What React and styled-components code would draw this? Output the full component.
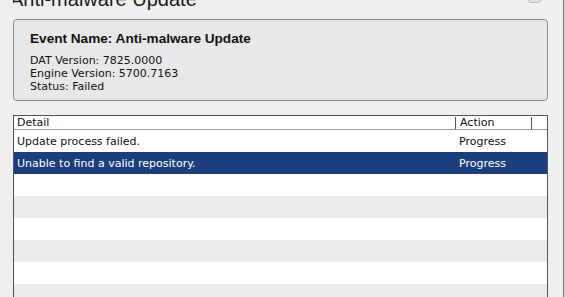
import styled, { createGlobalStyle } from "styled-components";

const GlobalStyle = createGlobalStyle`
  html, body {
    margin: 0;
    padding: 0;
    background: #efefef;
    overflow: hidden;
  }
  * {
    box-sizing: border-box;
  }
`;

// Lista de linhas da tabela
const rows = [
  { id: 1, detail: "Update process failed.", action: "Progress" },
  { id: 2, detail: "Unable to find a valid repository.", action: "Progress" },
  { id: 3, detail: "", action: "" },
  { id: 4, detail: "", action: "" },
  { id: 5, detail: "", action: "" },
  { id: 6, detail: "", action: "" },
  { id: 7, detail: "", action: "" },
  { id: 8, detail: "", action: "" },
];

const selectedId = 2;

export default function App() {
  return (
    <>
      <GlobalStyle />
      <Screen>
        <Window>
          <TitleBar>
            <TitleText>Anti-malware Update</TitleText>
            <CloseButton />
          </TitleBar>
          <EventBox>
            <EventTitle>Event Name: Anti-malware Update</EventTitle>
            <InfoLine>DAT Version: 7825.0000</InfoLine>
            <InfoLine>Engine Version: 5700.7163</InfoLine>
            <InfoLine>Status: Failed</InfoLine>
          </EventBox>
          <Table>
            <HeaderRow>
              <HeaderCell>Detail</HeaderCell>
              <HeaderCell $action>Action</HeaderCell>
              <HeaderEnd />
            </HeaderRow>
            {rows.map((row, i) => (
              <Row key={row.id} $selected={row.id === selectedId} $odd={i % 2 === 1}>
                <Cell>{row.detail}</Cell>
                <Cell $action>{row.action}</Cell>
              </Row>
            ))}
          </Table>
        </Window>
        <Edge />
      </Screen>
    </>
  );
}

const Screen = styled.div`
  width: 565px;
  height: 297px;
  display: flex;
  overflow: hidden;
  font-family: "DejaVu Sans", "Lucida Grande", sans-serif;
  color: #111;
`;

const Window = styled.div`
  width: 564px;
  padding: 0 15px 0 13px;
  display: flex;
  flex-direction: column;
  border-right: 1px solid #7c7c7c;
`;

const Edge = styled.div`
  width: 1px;
  background: #d0d0d0;
`;

const TitleBar = styled.div`
  flex-shrink: 0;
  height: 19px;
  position: relative;
  overflow: hidden;
`;

const TitleText = styled.div`
  font-family: "Liberation Sans", Arial, sans-serif;
  font-size: 20px;
  line-height: 20px;
  margin-top: -11px;
  margin-left: -3px;
  color: #1a1a1a;
`;

const CloseButton = styled.div`
  position: absolute;
  top: -10px;
  right: 7px;
  width: 13px;
  height: 13px;
  border-radius: 3px;
  border: 1px solid #b8b8b8;
  background: #e2e2e2;
`;

const EventBox = styled.div`
  flex-shrink: 0;
  height: 82px;
  border: 1px solid #8a8a8a;
  border-radius: 4px;
  background: #e8e8e8;
  padding: 11px 16px 0;
`;

const EventTitle = styled.div`
  font-family: "Liberation Sans", Arial, sans-serif;
  font-size: 13.6px;
  font-weight: bold;
  line-height: 16px;
  margin-bottom: 7px;
`;

const InfoLine = styled.div`
  font-size: 11px;
  line-height: 13px;
`;

const Table = styled.div`
  flex-shrink: 0;
  margin-top: 14px;
  border: 1px solid #555;
  border-bottom: none;
  background: #fff;
`;

const HeaderRow = styled.div`
  display: flex;
  height: 14px;
  border-bottom: 1px solid #9a9a9a;
  font-size: 11px;
`;

const HeaderCell = styled.div`
  flex: ${(p) => (p.$action ? "0 0 77px" : "1")};
  padding-left: ${(p) => (p.$action ? "4px" : "3px")};
  border-left: ${(p) => (p.$action ? "1px solid #555" : "none")};
  border-right: ${(p) => (p.$action ? "1px solid #555" : "none")};
  height: 12px;
  align-self: center;
  line-height: 12px;
`;

const HeaderEnd = styled.div`
  flex: 0 0 15px;
`;

const Row = styled.div`
  display: flex;
  align-items: center;
  height: 22px;
  font-size: 11px;
  background: ${(p) => (p.$selected ? "#1b3f7d" : p.$odd ? "#ebebeb" : "#ffffff")};
  color: ${(p) => (p.$selected ? "#ffffff" : "#111")};
`;

const Cell = styled.div`
  flex: ${(p) => (p.$action ? "0 0 93px" : "1")};
  padding-left: ${(p) => (p.$action ? "5px" : "3px")};
  white-space: nowrap;
`;
